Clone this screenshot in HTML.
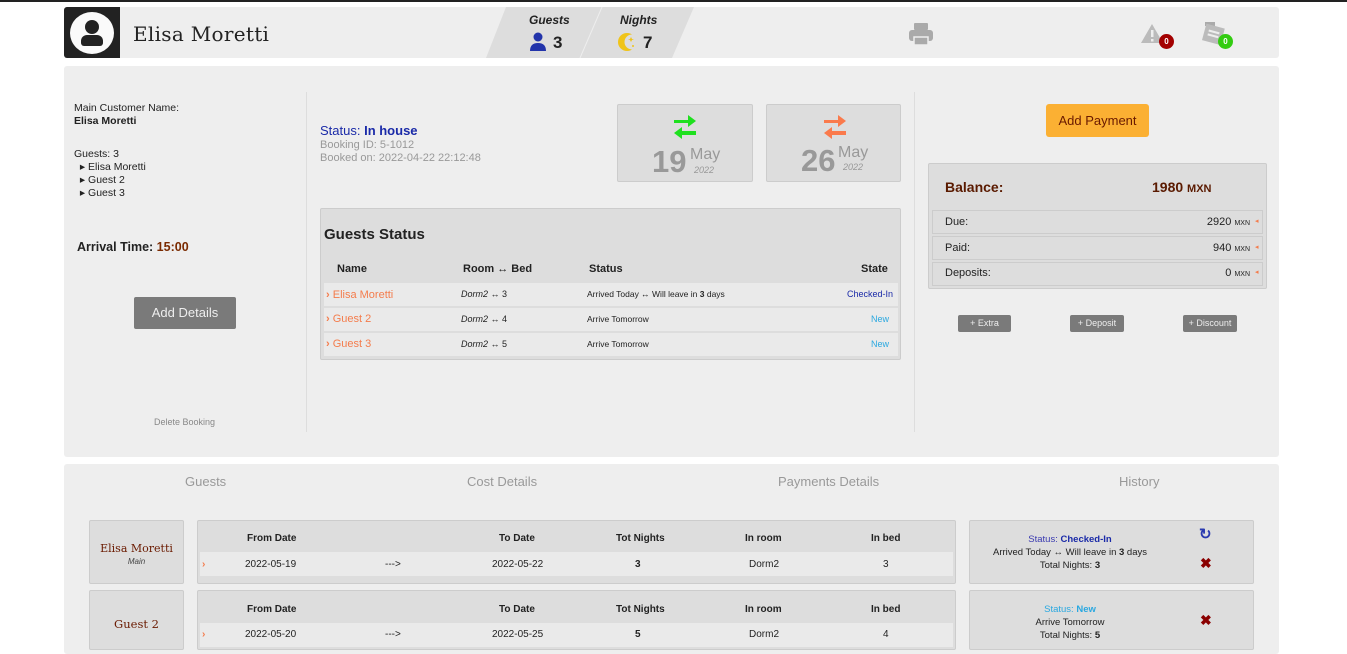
<!DOCTYPE html>
<html><head><meta charset="utf-8"><style>
*{box-sizing:border-box;margin:0;padding:0}
body{width:1347px;height:643px;overflow:hidden;background:#fff;font-family:"Liberation Sans",sans-serif;font-size:11px;color:#222;position:relative}
.a{position:absolute}
.n{font-family:"Liberation Sans Narrow","Liberation Sans",sans-serif}
.box{background:#ddd;border:1px solid #ccc;border-radius:2px}
.btn{background:#7a7a7a;color:#eee;border-radius:2px;text-align:center}
.or{color:#f47c4c}
.serif{font-family:"DejaVu Serif","Liberation Serif",serif}
</style></head><body>
<div class="a" style="left:0;top:0;width:1347px;height:2px;background:#222"></div>
<!-- header -->
<div class="a" style="left:64px;top:7px;width:1215px;height:51px;background:#eee;border-radius:3px"></div>
<div class="a" style="left:64px;top:7px;width:56px;height:51px;background:#222;border-radius:3px 0 0 3px"></div>
<div class="a" style="left:70px;top:12px;width:44px;height:42px;border-radius:50%;background:#fafafa"></div>
<div class="a" style="left:85px;top:20px;width:14px;height:14px;border-radius:50%;background:#222"></div>
<div class="a" style="left:81px;top:35px;width:22px;height:11px;border-radius:6px 6px 3px 3px;background:#222"></div>
<div class="a serif" style="left:133px;top:22px;font-size:20px;color:#222;letter-spacing:0.3px">Elisa Moretti</div>
<svg class="a" style="left:486px;top:7px" width="210" height="51"><polygon points="20,0 208,0 186,51 0,51" fill="#ddd"/><line x1="116" y1="0" x2="94" y2="51" stroke="#eee" stroke-width="1"/></svg>
<div class="a n" style="left:529px;top:13px;font-size:12px;font-weight:bold;font-style:italic;color:#222">Guests</div>
<svg class="a" style="left:529px;top:32px" width="18" height="20"><circle cx="9" cy="5" r="4.5" fill="#2233aa"/><path d="M1 19 Q1 11 9 11 Q17 11 17 19Z" fill="#2233aa"/></svg>
<div class="a n" style="left:553px;top:33px;font-size:17px;font-weight:bold">3</div>
<div class="a n" style="left:620px;top:13px;font-size:12px;font-weight:bold;font-style:italic;color:#222">Nights</div>
<svg class="a" style="left:618px;top:32px" width="20" height="20"><circle cx="9" cy="10" r="9" fill="#f0c419"/><circle cx="14" cy="10" r="7.5" fill="#ddd"/><path d="M13 5 l1 2 2 .5 -2 .5 -1 2 -1 -2 -2 -.5 2 -.5z" fill="#f0c419"/><circle cx="15" cy="14" r="1" fill="#f0c419"/></svg>
<div class="a n" style="left:643px;top:33px;font-size:17px;font-weight:bold">7</div>
<svg class="a" style="left:908px;top:22px" width="26" height="24"><rect x="6" y="1" width="14" height="7" fill="#aaa" rx="1"/><rect x="1" y="8" width="24" height="11" rx="3" fill="#aaa"/><rect x="6" y="15" width="14" height="8" fill="#aaa" stroke="#eee" stroke-width="1.5"/></svg>
<svg class="a" style="left:1140px;top:23px" width="24" height="21"><path d="M12 1 L23 20 L1 20Z" fill="#bbb"/><rect x="11" y="7" width="2.5" height="7" fill="#eee"/><rect x="11" y="16" width="2.5" height="2.5" fill="#eee"/></svg>
<div class="a" style="left:1159px;top:34px;width:15px;height:15px;border-radius:50%;background:#a30000;color:#fff;font-size:8px;font-weight:bold;text-align:center;line-height:15px">0</div>
<svg class="a" style="left:1200px;top:20px" width="28" height="26"><rect x="5" y="2" width="10" height="4" fill="#aaa"/><g transform="rotate(15 14 14)"><rect x="4" y="6" width="19" height="17" fill="#bbb"/><rect x="8" y="11" width="11" height="2" fill="#eee"/><rect x="8" y="15" width="11" height="2" fill="#eee"/></g></svg>
<div class="a" style="left:1218px;top:34px;width:15px;height:15px;border-radius:50%;background:#33cc11;color:#fff;font-size:8px;font-weight:bold;text-align:center;line-height:15px">0</div>

<!-- main panel -->
<div class="a" style="left:64px;top:66px;width:1215px;height:391px;background:#eee;border-radius:3px"></div>
<div class="a" style="left:306px;top:92px;width:1px;height:340px;background:#ddd"></div>
<div class="a" style="left:914px;top:92px;width:1px;height:340px;background:#ddd"></div>
<div class="a" style="left:74px;top:102px;line-height:13px;font-size:10.5px">Main Customer Name:<br><b>Elisa Moretti</b></div>
<div class="a" style="left:74px;top:148px;line-height:13px;font-size:10.5px">Guests: 3<br>&nbsp;&nbsp;▸ Elisa Moretti<br>&nbsp;&nbsp;▸ Guest 2<br>&nbsp;&nbsp;▸ Guest 3</div>
<div class="a" style="left:77px;top:240px;font-size:12.5px;font-weight:bold">Arrival Time: <span style="color:#7a2a00">15:00</span></div>
<div class="a btn" style="left:134px;top:297px;width:102px;height:32px;line-height:32px;font-size:13px">Add Details</div>
<div class="a" style="left:154px;top:417px;font-size:9px;color:#888">Delete Booking</div>

<div class="a" style="left:320px;top:123px;font-size:13px;color:#1a2aa8">Status: <b>In house</b></div>
<div class="a" style="left:320px;top:139px;color:#999;line-height:13px">Booking ID: 5-1012<br>Booked on: 2022-04-22 22:12:48</div>

<div class="a box" style="left:617px;top:104px;width:136px;height:78px"></div>
<svg class="a" style="left:672px;top:113px" width="26" height="26"><path d="M2 7 H16 V2 L24 8 L16 14 V10 H2Z" fill="#1fe01f"/><path d="M24 18 H10 V14 L2 20 L10 26 V22 H24Z" fill="#1fe01f"/></svg>
<div class="a" style="left:652px;top:144px;font-size:31px;font-weight:bold;color:#999">19</div>
<div class="a" style="left:690px;top:146px;font-size:16px;color:#999">May</div>
<div class="a" style="left:694px;top:165px;font-size:9px;font-style:italic;color:#999">2022</div>
<div class="a box" style="left:766px;top:104px;width:135px;height:78px"></div>
<svg class="a" style="left:822px;top:113px" width="26" height="26"><path d="M2 7 H16 V2 L24 8 L16 14 V10 H2Z" fill="#fa7a4c"/><path d="M24 18 H10 V14 L2 20 L10 26 V22 H24Z" fill="#fa7a4c"/></svg>
<div class="a" style="left:801px;top:143px;font-size:31px;font-weight:bold;color:#999">26</div>
<div class="a" style="left:838px;top:144px;font-size:16px;color:#999">May</div>
<div class="a" style="left:843px;top:162px;font-size:9px;font-style:italic;color:#999">2022</div>

<div class="a box" style="left:320px;top:208px;width:581px;height:152px"></div>
<div class="a" style="left:324px;top:226px;font-size:15px;font-weight:bold;color:#222">Guests Status</div>
<div class="a" style="left:337px;top:263px;font-size:11px;font-weight:bold">Name</div>
<div class="a" style="left:463px;top:263px;font-size:11px;font-weight:bold">Room ↔ Bed</div>
<div class="a" style="left:589px;top:263px;font-size:11px;font-weight:bold">Status</div>
<div class="a" style="left:861px;top:263px;font-size:11px;font-weight:bold">State</div>
<div class="a" style="left:324px;top:283px;width:574px;height:23px;background:#eaeaea"></div>
<div class="a" style="left:324px;top:308px;width:574px;height:23px;background:#eaeaea"></div>
<div class="a" style="left:324px;top:333px;width:574px;height:23px;background:#eaeaea"></div>
<div class="a or" style="left:326px;top:289px;font-size:11px"><b>›</b> Elisa Moretti</div>
<div class="a or" style="left:326px;top:313px;font-size:11px"><b>›</b> Guest 2</div>
<div class="a or" style="left:326px;top:338px;font-size:11px"><b>›</b> Guest 3</div>
<div class="a" style="left:461px;top:289px;font-size:9px"><i>Dorm2</i> ↔ 3</div>
<div class="a" style="left:461px;top:314px;font-size:9px"><i>Dorm2</i> ↔ 4</div>
<div class="a" style="left:461px;top:339px;font-size:9px"><i>Dorm2</i> ↔ 5</div>
<div class="a" style="left:587px;top:289px;font-size:8.5px">Arrived Today ↔ Will leave in <b>3</b> days</div>
<div class="a" style="left:587px;top:314px;font-size:8.5px">Arrive Tomorrow</div>
<div class="a" style="left:587px;top:339px;font-size:8.5px">Arrive Tomorrow</div>
<div class="a" style="left:847px;top:289px;font-size:9px;color:#1a2aa8">Checked-In</div>
<div class="a" style="left:871px;top:314px;font-size:9px;color:#2aa8e0">New</div>
<div class="a" style="left:871px;top:339px;font-size:9px;color:#2aa8e0">New</div>

<div class="a" style="left:1046px;top:104px;width:103px;height:33px;background:#fbb033;border-radius:3px;color:#6a1a00;font-size:13px;text-align:center;line-height:33px">Add Payment</div>
<div class="a box" style="left:928px;top:163px;width:339px;height:126px"></div>
<div class="a" style="left:945px;top:179px;font-size:14px;font-weight:bold;color:#5a1a00">Balance:</div>
<div class="a" style="left:1152px;top:179px;font-size:14px;font-weight:bold;color:#5a1a00">1980 <span style="font-size:11px">MXN</span></div>
<div class="a" style="left:932px;top:210px;width:331px;height:24px;border:1px solid #ccc;background:#ddd"></div>
<div class="a" style="left:932px;top:236px;width:331px;height:24px;border:1px solid #ccc;background:#ddd"></div>
<div class="a" style="left:932px;top:262px;width:331px;height:24px;border:1px solid #ccc;background:#ddd"></div>
<div class="a" style="left:945px;top:216px">Due:</div>
<div class="a" style="left:945px;top:242px">Paid:</div>
<div class="a" style="left:945px;top:267px">Deposits:</div>
<div class="a" style="left:1150px;top:216px;width:100px;text-align:right">2920 <span style="font-size:7px">MXN</span></div>
<div class="a" style="left:1150px;top:242px;width:100px;text-align:right">940 <span style="font-size:7px">MXN</span></div>
<div class="a" style="left:1150px;top:267px;width:100px;text-align:right">0 <span style="font-size:7px">MXN</span></div>
<div class="a or" style="left:1255px;top:217px;font-size:7px">◂</div>
<div class="a or" style="left:1255px;top:243px;font-size:7px">◂</div>
<div class="a or" style="left:1255px;top:268px;font-size:7px">◂</div>
<div class="a btn" style="left:958px;top:315px;width:53px;height:17px;line-height:17px;font-size:9px">+ Extra</div>
<div class="a btn" style="left:1070px;top:315px;width:54px;height:17px;line-height:17px;font-size:9px">+ Deposit</div>
<div class="a btn" style="left:1183px;top:315px;width:54px;height:17px;line-height:17px;font-size:9px">+ Discount</div>

<!-- bottom panel -->
<div class="a" style="left:64px;top:464px;width:1215px;height:190px;background:#eee;border-radius:3px"></div>
<div class="a" style="left:185px;top:474px;font-size:13px;color:#999">Guests</div>
<div class="a" style="left:467px;top:474px;font-size:13px;color:#999">Cost Details</div>
<div class="a" style="left:778px;top:474px;font-size:13px;color:#999">Payments Details</div>
<div class="a" style="left:1119px;top:474px;font-size:13px;color:#999">History</div>

<div class="a box" style="left:89px;top:520px;width:95px;height:64px"></div>
<div class="a serif" style="left:89px;top:542px;width:95px;text-align:center;font-size:11px;color:#6a1a00">Elisa Moretti</div>
<div class="a" style="left:89px;top:557px;width:95px;text-align:center;font-size:8px;font-style:italic;color:#444">Main</div>
<div class="a box" style="left:89px;top:590px;width:95px;height:60px"></div>
<div class="a serif" style="left:89px;top:617px;width:95px;text-align:center;font-size:11.5px;color:#6a1a00">Guest 2</div>

<div class="a box" style="left:197px;top:520px;width:759px;height:64px"></div>
<div class="a box" style="left:197px;top:590px;width:759px;height:60px"></div>
<div class="a" style="left:200px;top:552px;width:753px;height:24px;background:#eaeaea"></div>
<div class="a" style="left:200px;top:623px;width:753px;height:24px;background:#eaeaea"></div>
<div class="a" style="left:0;top:533px;width:1347px;font-size:10px;font-weight:bold">
<span class="a" style="left:247px">From Date</span><span class="a" style="left:499px">To Date</span><span class="a" style="left:616px">Tot Nights</span><span class="a" style="left:745px">In room</span><span class="a" style="left:871px">In bed</span></div>
<div class="a" style="left:0;top:604px;width:1347px;font-size:10px;font-weight:bold">
<span class="a" style="left:247px">From Date</span><span class="a" style="left:499px">To Date</span><span class="a" style="left:616px">Tot Nights</span><span class="a" style="left:745px">In room</span><span class="a" style="left:871px">In bed</span></div>
<div class="a" style="left:0;top:559px;width:1347px;font-size:10px">
<span class="a or" style="left:202px"><b>›</b></span><span class="a" style="left:245px">2022-05-19</span><span class="a" style="left:385px">---></span><span class="a" style="left:492px">2022-05-22</span><span class="a" style="left:635px;font-weight:bold">3</span><span class="a" style="left:749px">Dorm2</span><span class="a" style="left:883px">3</span></div>
<div class="a" style="left:0;top:629px;width:1347px;font-size:10px">
<span class="a or" style="left:202px"><b>›</b></span><span class="a" style="left:245px">2022-05-20</span><span class="a" style="left:385px">---></span><span class="a" style="left:492px">2022-05-25</span><span class="a" style="left:635px;font-weight:bold">5</span><span class="a" style="left:749px">Dorm2</span><span class="a" style="left:883px">4</span></div>

<div class="a box" style="left:969px;top:520px;width:285px;height:64px"></div>
<div class="a box" style="left:969px;top:590px;width:285px;height:60px"></div>
<div class="a" style="left:969px;top:533px;width:202px;text-align:center;font-size:9.5px;line-height:13px"><span style="color:#3a3ab0">Status: <b style="color:#1a2aa8">Checked-In</b></span><br>Arrived Today ↔ Will leave in <b>3</b> days<br>Total Nights: <b>3</b></div>
<div class="a" style="left:969px;top:603px;width:202px;text-align:center;font-size:9.5px;line-height:13px"><span style="color:#2aa8e0">Status: <b>New</b></span><br>Arrive Tomorrow<br>Total Nights: <b>5</b></div>
<div class="a" style="left:1199px;top:525px;font-size:15px;color:#2a3ab0;font-weight:bold">↻</div>
<div class="a" style="left:1200px;top:555px;font-size:14px;color:#8a0000;font-weight:bold">✖</div>
<div class="a" style="left:1200px;top:612px;font-size:14px;color:#8a0000;font-weight:bold">✖</div>
</body></html>
